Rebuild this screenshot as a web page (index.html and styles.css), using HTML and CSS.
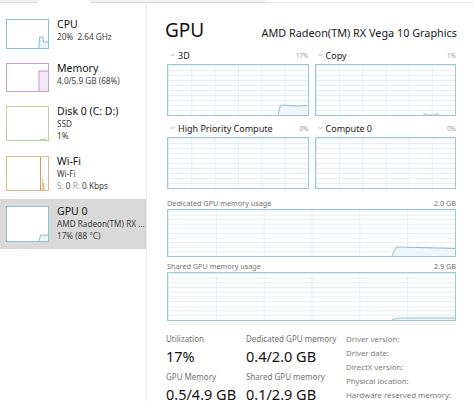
FILE: index.html
```html
<!DOCTYPE html>
<html lang="en">
<head>
<meta charset="utf-8">
<title>Task Manager - GPU</title>
<link rel="stylesheet" href="styles.css">
</head>
<body>
<div class="tabs"><span class="t1"></span><span class="tsel"></span><span class="t2"></span><span class="trest"></span></div>
<div class="app">
  <aside class="sidebar">
    <div class="item">
      <div class="thumb cpu h30">
        <svg viewBox="0 0 41 28" preserveAspectRatio="none"><polygon class="f-cpu" points="32,28 32.5,17 36,17 36.6,22 41,22 41,28"/><polyline class="l-cpu" points="32,28 32.5,17 36,17 36.6,22 41,22"/></svg>
      </div>
      <div class="info">
        <div class="iname">CPU</div>
        <div class="isub">20%&nbsp; 2.64 GHz</div>
      </div>
    </div>
    <div class="item">
      <div class="thumb mem h29">
        <svg viewBox="0 0 41 27" preserveAspectRatio="none"><polygon class="f-mem" points="32,27 32,7 41,7 41,27"/><polyline class="l-mem" points="32,27 32,7 41,7"/></svg>
      </div>
      <div class="info">
        <div class="iname">Memory</div>
        <div class="isub">4.0/5.9 GB (68%)</div>
      </div>
    </div>
    <div class="item">
      <div class="thumb disk h35">
        <svg viewBox="0 0 41 33" preserveAspectRatio="none"><polyline class="l-disk" points="33,32.5 39,32"/></svg>
      </div>
      <div class="info">
        <div class="iname">Disk 0 (C: D:)</div>
        <div class="isub">SSD</div>
        <div class="isub">1%</div>
      </div>
    </div>
    <div class="item">
      <div class="thumb wifi h35">
        <svg viewBox="0 0 41 33" preserveAspectRatio="none"><polyline class="l-wifi" points="33.5,0 33.5,33"/><polyline class="l-wifi2" points="35,33 35.6,22 36.2,33 36.8,26 37.3,33"/></svg>
      </div>
      <div class="info">
        <div class="iname">Wi-Fi</div>
        <div class="isub">Wi-Fi</div>
        <div class="isub"><span class="lite">S:</span> 0 <span class="lite">R:</span> 0 Kbps</div>
      </div>
    </div>
    <div class="item sel">
      <div class="thumb gpu h36">
        <svg viewBox="0 0 41 34" preserveAspectRatio="none"><polygon class="f-cpu" points="32,34 33.5,28 41,28 41,34"/><polyline class="l-cpu" points="32,34 33.5,28 41,28"/></svg>
      </div>
      <div class="info">
        <div class="iname">GPU 0</div>
        <div class="isub">AMD Radeon(TM) RX ...</div>
        <div class="isub">17% (88 °C)</div>
      </div>
    </div>
  </aside>

  <main class="main">
    <div class="head">
      <h1 class="title">GPU</h1>
      <div class="model">AMD Radeon(TM) RX Vega 10 Graphics</div>
    </div>

    <div class="pairs">
      <div class="graph">
        <div class="glabel"><span class="name"><svg class="chev" viewBox="0 0 6 4"><polyline points="0.5,0.5 3,3.2 5.5,0.5"/></svg>3D</span><span class="pct">17%</span></div>
        <div class="box h52">
          <svg viewBox="0 0 138 50" preserveAspectRatio="none"><polygon class="f-gpu" points="109,50 111,41 114,40 119,40.5 128,41 138,40.5 138,50"/><polyline class="l-gpu" points="109,50 111,41 114,40 119,40.5 128,41 138,40.5"/></svg>
        </div>
      </div>
      <div class="graph">
        <div class="glabel"><span class="name"><svg class="chev" viewBox="0 0 6 4"><polyline points="0.5,0.5 3,3.2 5.5,0.5"/></svg>Copy</span><span class="pct">1%</span></div>
        <div class="box h52">
          <svg viewBox="0 0 138 50" preserveAspectRatio="none"><polyline class="l-gpu" points="106,50 108,48.5 110,50 118,50 120,48.5 122,50"/></svg>
        </div>
      </div>
      <div class="graph row2">
        <div class="glabel"><span class="name"><svg class="chev" viewBox="0 0 6 4"><polyline points="0.5,0.5 3,3.2 5.5,0.5"/></svg>High Priority Compute</span><span class="pct">0%</span></div>
        <div class="box h52"></div>
      </div>
      <div class="graph row2">
        <div class="glabel"><span class="name"><svg class="chev" viewBox="0 0 6 4"><polyline points="0.5,0.5 3,3.2 5.5,0.5"/></svg>Compute 0</span><span class="pct">0%</span></div>
        <div class="box h52"></div>
      </div>
    </div>

    <div class="mlabel first"><span>Dedicated GPU memory usage</span><span>2.0 GB</span></div>
    <div class="box wide h48">
      <svg viewBox="0 0 287 46" preserveAspectRatio="none"><polygon class="f-gpu" points="224,46 228.5,37 250,37.5 287,38.5 287,46"/><polyline class="l-gpu" points="224,46 228.5,37 250,37.5 287,38.5"/></svg>
    </div>
    <div class="mlabel"><span>Shared GPU memory usage</span><span>2.9 GB</span></div>
    <div class="box wide h49">
      <svg viewBox="0 0 287 47" preserveAspectRatio="none"><polygon class="f-gpu" points="224,47 230,45 287,45 287,47"/><polyline class="l-gpu" points="224,47 230,45 287,45"/></svg>
    </div>

    <div class="divider"></div>

    <div class="stats">
      <div class="col">
        <div class="slabel">Utilization</div>
        <div class="sval">17%</div>
        <div class="slabel gap">GPU Memory</div>
        <div class="sval">0.5/4.9 GB</div>
      </div>
      <div class="col">
        <div class="slabel">Dedicated GPU memory</div>
        <div class="sval">0.4/2.0 GB</div>
        <div class="slabel gap">Shared GPU memory</div>
        <div class="sval">0.1/2.9 GB</div>
      </div>
      <div class="col props">
        <div>Driver version:</div>
        <div>Driver date:</div>
        <div>DirectX version:</div>
        <div>Physical location:</div>
        <div>Hardware reserved memory:</div>
      </div>
    </div>
  </main>
</div>
</body>
</html>
```

FILE: styles.css
```css
html, body {
  margin: 0;
  padding: 0;
}
body {
  width: 474px;
  height: 401px;
  overflow: hidden;
  background: #ffffff;
  color: #1a1a1a;
  font-family: "Noto Sans", "Open Sans", sans-serif;
}

/* top tab strip remnants */
.tabs {
  display: flex;
  height: 4px;
}
.t1 {
  width: 38px;
  height: 2px;
  background: #f1f1f1;
  border-bottom: 1px solid #dcdcdc;
}
.tsel {
  width: 52px;
}
.t2 {
  width: 175px;
  height: 2px;
  background: #f1f1f1;
  border-bottom: 1px solid #dadada;
}
.trest {
  flex: 1;
  height: 2px;
  border-bottom: 1px solid #e6e6e6;
}

.app {
  display: flex;
  height: 397px;
}

/* sidebar */
.sidebar {
  width: 146px;
  flex: none;
  border-right: 1px solid #e9e9e9;
  padding-top: 8px;
}
.item {
  display: flex;
  gap: 8px;
  padding: 7px 0 7px 6px;
}
.item.sel {
  background: #d9d9d9;
}
.thumb {
  width: 43px;
  flex: none;
  box-sizing: border-box;
  border: 1px solid #8fc2d0;
  background: #ffffff;
}
.thumb svg {
  display: block;
  width: 100%;
  height: 100%;
}
.h29 { height: 29px; }
.h30 { height: 30px; }
.h35 { height: 35px; }
.h36 { height: 36px; }
.thumb.mem { border-color: #c79bd6; }
.thumb.disk { border-color: #b9d29c; }
.thumb.wifi { border-color: #ddbb8e; }

.f-cpu { fill: #eaf5f8; stroke: none; }
.l-cpu { fill: none; stroke: #6eaec2; stroke-width: 0.8; }
.f-mem { fill: #f3e9f6; stroke: none; }
.l-mem { fill: none; stroke: #b27ec6; stroke-width: 0.8; }
.l-disk { fill: none; stroke: #9dbb7a; stroke-width: 0.8; }
.l-wifi { fill: none; stroke: #c99a5c; stroke-width: 1; }
.l-wifi2 { fill: none; stroke: #d4a66c; stroke-width: 0.6; }

.info {
  display: flex;
  flex-direction: column;
  margin-top: -2px;
  min-width: 0;
  white-space: nowrap;
}
.iname {
  font-size: 10.5px;
  line-height: 14px;
  color: #111;
}
.isub {
  font-size: 8.2px;
  line-height: 12px;
  color: #3c3c3c;
}
.lite {
  color: #9a9a9a;
}

/* main panel */
.main {
  flex: 1;
  min-width: 0;
  padding: 14px 18px 0 20px;
}
.head {
  display: flex;
  justify-content: space-between;
  align-items: baseline;
  height: 26px;
}
.title {
  margin: 0 0 0 -2px;
  font-size: 19px;
  font-weight: 400;
  line-height: 24px;
  color: #111;
}
.model {
  font-size: 10.85px;
  color: #1a1a1a;
  margin-right: -1px;
}

.pairs {
  display: grid;
  grid-template-columns: 1fr 1fr;
  column-gap: 6px;
  margin-top: 4px;
}
.graph.row2 {
  margin-top: 5px;
}
.glabel {
  display: flex;
  justify-content: space-between;
  align-items: center;
  height: 14px;
  margin-bottom: 2px;
  padding-left: 3px;
}
.name {
  display: flex;
  align-items: center;
  gap: 3px;
  font-size: 9px;
  color: #1a1a1a;
}
.chev {
  width: 5px;
  height: 4px;
}
.chev polyline {
  fill: none;
  stroke: #9a9a9a;
  stroke-width: 0.8;
}
.pct {
  font-size: 6.5px;
  color: #9d9d9d;
}

.box {
  box-sizing: border-box;
  border: 1px solid #9ec7d5;
  background-color: #ffffff;
  background-image:
    linear-gradient(to right, #e3eff4 1px, transparent 1px),
    linear-gradient(to bottom, #e3eff4 1px, transparent 1px);
  background-size: calc(100% / 6) 100%, 100% 10%;
}
.box svg {
  display: block;
  width: 100%;
  height: 100%;
}
.h48 { height: 48px; }
.h49 { height: 49px; }
.h52 { height: 52px; }

.f-gpu { fill: #eef6fa; stroke: none; }
.l-gpu { fill: none; stroke: #78adc4; stroke-width: 0.8; }

.mlabel {
  display: flex;
  justify-content: space-between;
  font-size: 7.25px;
  line-height: 12px;
  color: #707070;
  margin-top: 3px;
}
.mlabel.first {
  margin-top: 8px;
}

.divider {
  margin-top: 3px;
  border-top: 1px solid #f2f2f2;
}

.stats {
  display: grid;
  grid-template-columns: 80px 100px 1fr;
  margin-top: 8px;
  margin-left: -1px;
}
.col {
  display: flex;
  flex-direction: column;
  white-space: nowrap;
}
.slabel {
  font-size: 8px;
  line-height: 12px;
  color: #727272;
}
.slabel.gap {
  margin-top: 4px;
}
.sval {
  font-size: 14.5px;
  line-height: 22px;
  color: #111;
}
.props {
  margin-top: -1px;
  font-size: 7.8px;
  line-height: 14px;
  color: #7a7a7a;
}
```
